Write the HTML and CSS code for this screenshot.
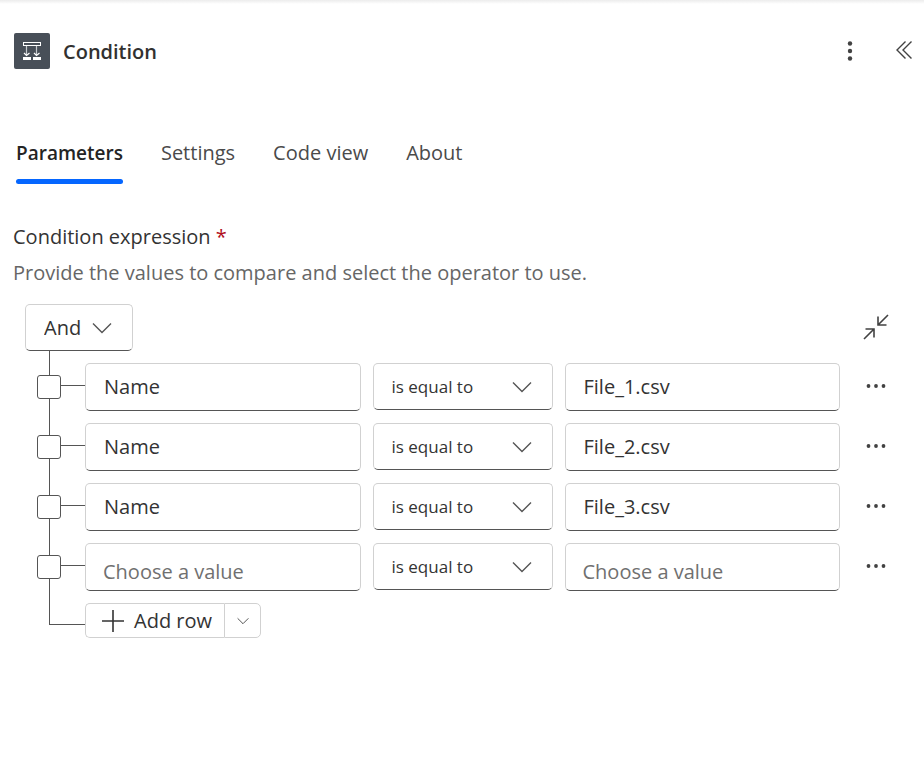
FILE: index.html
```html
<!DOCTYPE html>
<html lang="en">
<head>
    <meta charset="UTF-8">
    <meta name="viewport" content="width=device-width, initial-scale=1.0">
    <title>Condition</title>
    <link rel="stylesheet" href="styles.css">
</head>
<body>
    <!-- Shared icons -->
    <svg class="icon-defs" aria-hidden="true">
        <symbol id="chevron" viewBox="0 0 20 12">
            <path d="M1 1.5L10 10.5L19 1.5" fill="none" stroke="currentColor" stroke-width="1.4"/>
        </symbol>
        <symbol id="dots" viewBox="0 0 20 4">
            <circle cx="2.5" cy="2" r="1.9"/>
            <circle cx="10" cy="2" r="1.9"/>
            <circle cx="17.5" cy="2" r="1.9"/>
        </symbol>
    </svg>

    <header class="panel-header">
        <svg class="logo" width="36" height="36" viewBox="0 0 36 36" aria-hidden="true">
            <rect width="36" height="36" rx="2" fill="#484f58"/>
            <rect x="9.5" y="9.5" width="17" height="3" fill="none" stroke="#fff"/>
            <path d="M12.5 13V22M22.5 13V22" stroke="#c5c9cd" stroke-width="1.2"/>
            <path d="M10 20L12.5 22.5L15.5 20M20 20L22.5 22.5L25.5 20" fill="none" stroke="#fff" stroke-width="1.2"/>
            <path d="M9 24H17V27H9ZM19 24H27V27H19Z" fill="#fff"/>
        </svg>
        <h1>Condition</h1>
        <button class="icon-btn more" type="button" aria-label="More commands">
            <svg width="6" height="20" viewBox="0 0 6 20">
                <circle cx="3" cy="2.5" r="2.2"/>
                <circle cx="3" cy="10" r="2.2"/>
                <circle cx="3" cy="17.5" r="2.2"/>
            </svg>
        </button>
        <button class="icon-btn" type="button" aria-label="Collapse panel">
            <svg width="18" height="20" viewBox="0 0 18 20" fill="none" stroke="currentColor" stroke-width="1.4">
                <path d="M10.5 .5L2 9L10.5 17.5M16.5 .5L8 9L16.5 17.5"/>
            </svg>
        </button>
    </header>

    <nav class="tabs">
        <a class="active" href="#parameters">Parameters</a>
        <a href="#settings">Settings</a>
        <a href="#code">Code view</a>
        <a href="#about">About</a>
    </nav>

    <main id="parameters">
        <h2>Condition expression <span class="required">*</span></h2>
        <p class="hint">Provide the values to compare and select the operator to use.</p>

        <div class="group">
            <div class="group-header">
                <div class="dropdown logic">
                    <select aria-label="Logical operator">
                        <option>And</option>
                        <option>Or</option>
                    </select>
                    <svg width="20" height="12"><use href="#chevron"/></svg>
                </div>
                <button class="icon-btn row-menu" type="button" aria-label="Collapse group">
                    <svg width="26" height="26" viewBox="0 0 26 26" fill="none" stroke="currentColor" stroke-width="1.6">
                        <path d="M1 25L11 15M2.5 15H11V23.5M25 1L15 11M15 2.5V11H23.5"/>
                    </svg>
                </button>
            </div>

            <ul class="rows">
                <li class="row">
                    <input type="checkbox" aria-label="Select row 1">
                    <span class="connector"></span>
                    <input class="value" type="text" value="Name" placeholder="Choose a value" aria-label="Left value 1">
                    <div class="dropdown operator">
                        <select aria-label="Operator 1"><option>is equal to</option></select>
                        <svg width="20" height="12"><use href="#chevron"/></svg>
                    </div>
                    <input class="value" type="text" value="File_1.csv" placeholder="Choose a value" aria-label="Right value 1">
                    <button class="icon-btn row-menu" type="button" aria-label="Row 1 menu">
                        <svg width="20" height="4"><use href="#dots"/></svg>
                    </button>
                </li>
                <li class="row">
                    <input type="checkbox" aria-label="Select row 2">
                    <span class="connector"></span>
                    <input class="value" type="text" value="Name" placeholder="Choose a value" aria-label="Left value 2">
                    <div class="dropdown operator">
                        <select aria-label="Operator 2"><option>is equal to</option></select>
                        <svg width="20" height="12"><use href="#chevron"/></svg>
                    </div>
                    <input class="value" type="text" value="File_2.csv" placeholder="Choose a value" aria-label="Right value 2">
                    <button class="icon-btn row-menu" type="button" aria-label="Row 2 menu">
                        <svg width="20" height="4"><use href="#dots"/></svg>
                    </button>
                </li>
                <li class="row">
                    <input type="checkbox" aria-label="Select row 3">
                    <span class="connector"></span>
                    <input class="value" type="text" value="Name" placeholder="Choose a value" aria-label="Left value 3">
                    <div class="dropdown operator">
                        <select aria-label="Operator 3"><option>is equal to</option></select>
                        <svg width="20" height="12"><use href="#chevron"/></svg>
                    </div>
                    <input class="value" type="text" value="File_3.csv" placeholder="Choose a value" aria-label="Right value 3">
                    <button class="icon-btn row-menu" type="button" aria-label="Row 3 menu">
                        <svg width="20" height="4"><use href="#dots"/></svg>
                    </button>
                </li>
                <li class="row">
                    <input type="checkbox" aria-label="Select row 4">
                    <span class="connector"></span>
                    <input class="value" type="text" placeholder="Choose a value" aria-label="Left value 4">
                    <div class="dropdown operator">
                        <select aria-label="Operator 4"><option>is equal to</option></select>
                        <svg width="20" height="12"><use href="#chevron"/></svg>
                    </div>
                    <input class="value" type="text" placeholder="Choose a value" aria-label="Right value 4">
                    <button class="icon-btn row-menu" type="button" aria-label="Row 4 menu">
                        <svg width="20" height="4"><use href="#dots"/></svg>
                    </button>
                </li>
            </ul>

            <div class="add-row">
                <button class="add" type="button">
                    <svg width="22" height="22" viewBox="0 0 22 22" stroke="currentColor" stroke-width="1.6"><path d="M11 0V22M0 11H22"/></svg>
                    Add row
                </button>
                <button class="add-more" type="button" aria-label="More add options">
                    <svg width="12" height="8"><use href="#chevron"/></svg>
                </button>
            </div>
        </div>
    </main>
</body>
</html>
```
FILE: styles.css
```css
* {
    box-sizing: border-box;
}
body {
    margin: 0;
    font-family: "Open Sans", "Noto Sans", sans-serif;
    font-size: 20px;
    line-height: 28px;
    color: #333;
    background: linear-gradient(#ececec, #fff 4px) no-repeat #fff;
}
h1, h2, p, ul {
    margin: 0;
    padding: 0;
}
button, input, select {
    font: inherit;
    color: inherit;
    margin: 0;
}
.icon-defs {
    position: absolute;
    width: 0;
    height: 0;
}

/* Header */
.panel-header {
    display: flex;
    align-items: center;
    padding: 33px 8px 0 14px;
}
.panel-header h1 {
    flex: 1;
    margin-left: 13px;
    padding-top: 2px;
    font-size: 20px;
    font-weight: 600;
    color: #323130;
}
.icon-btn {
    display: flex;
    align-items: center;
    justify-content: center;
    padding: 0;
    border: none;
    background: none;
    color: #424242;
    fill: #424242;
    cursor: pointer;
}
.panel-header .icon-btn {
    width: 24px;
    height: 32px;
}
.panel-header .more {
    margin-right: 30px;
}

/* Tabs */
.tabs {
    display: flex;
    gap: 38px;
    padding: 70px 16px 0;
}
.tabs a {
    padding-bottom: 12px;
    border-bottom: 5px solid transparent;
    color: #4a4a4a;
    text-decoration: none;
}
.tabs .active {
    position: relative;
    font-size: 19px;
    font-weight: 600;
    color: #242424;
}
.tabs .active::after {
    content: "";
    position: absolute;
    left: 0;
    right: 0;
    bottom: -5px;
    height: 5px;
    border-radius: 3px;
    background: #0566ff;
}

/* Condition builder */
main {
    padding: 39px 24px 0 13px;
}
h2 {
    font-size: 20px;
    font-weight: 400;
}
.required {
    color: #b10e1c;
}
.hint {
    margin-top: 8px;
    color: #666;
}
.group {
    position: relative;
    margin-top: 17px;
    padding-left: 24px;
}
.group::before {
    content: "";
    position: absolute;
    left: 36px;
    top: 46px;
    bottom: 13px;
    width: 36px;
    border: solid #555;
    border-width: 0 0 1px 1px;
}
.group-header {
    display: flex;
    justify-content: space-between;
    margin: 0 0 12px -12px;
}
.dropdown {
    display: grid;
    align-items: center;
    height: 47px;
}
.dropdown > * {
    grid-area: 1 / 1;
}
.dropdown svg {
    justify-self: end;
    margin-right: 21px;
    color: #555;
    pointer-events: none;
}
.dropdown select,
.value {
    width: 100%;
    height: 100%;
    padding: 0 18px;
    border: 1px solid #d1d1d1;
    border-bottom-color: #555;
    border-radius: 5px;
    background: #fff;
    appearance: none;
}
.logic {
    width: 108px;
}
.operator {
    flex: none;
    width: 180px;
    margin: 0 12px;
}
.operator select {
    font-size: 17px;
}
.rows {
    display: flex;
    flex-direction: column;
    gap: 12px;
    list-style: none;
}
.row {
    display: flex;
    position: relative;
}
.row input[type="checkbox"] {
    flex: none;
    align-self: center;
    width: 24px;
    height: 24px;
    border: 1px solid #555;
    border-radius: 3px;
    background: #fff;
    appearance: none;
}
.connector {
    flex: none;
    width: 24px;
    height: 23px;
    border-bottom: 1px solid #555;
}
.value {
    flex: 1;
    min-width: 0;
    height: 48px;
    padding-bottom: 2px;
}
.value:placeholder-shown {
    padding: 9px 17px 0;
}
.value::placeholder {
    color: #707070;
    opacity: 1;
}
.row-menu {
    flex: none;
    width: 48px;
    height: 46px;
    margin-left: 12px;
}

/* Add row */
.add-row {
    display: flex;
    position: relative;
    margin: 12px 0 0 48px;
}
.add-row button {
    display: flex;
    align-items: center;
    justify-content: center;
    height: 35px;
    padding: 0;
    border: 1px solid #d1d1d1;
    background: #fff;
}
.add-row .add {
    justify-content: flex-start;
    gap: 10px;
    width: 139px;
    padding-left: 16px;
    border-right: none;
    border-radius: 5px 0 0 5px;
}
.add-row .add-more {
    width: 37px;
    border-radius: 0 5px 5px 0;
}
```
